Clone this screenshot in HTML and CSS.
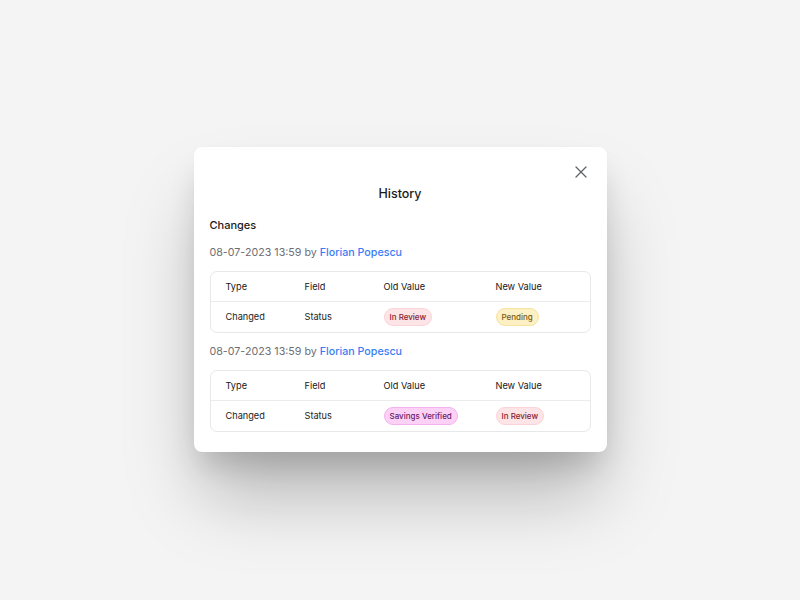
FILE: index.html
```html
<!DOCTYPE html>
<html lang="en">
<head>
<meta charset="utf-8">
<title>History</title>
<link rel="stylesheet" href="styles.css">
</head>
<body>
<div class="modal">
  <div class="modal-head">
    <h2 class="title">History</h2>
    <button class="close" aria-label="Close">
      <svg width="12" height="12" viewBox="0 0 12 12"><path d="M1 1L11 11M11 1L1 11" stroke="#5f6368" stroke-width="1.3" stroke-linecap="round"/></svg>
    </button>
  </div>
  <h3 class="section">Changes</h3>

  <div class="entry">
    <p class="meta">08-07-2023 13:59 by <span class="author">Florian Popescu</span></p>
    <table class="changes">
      <thead>
        <tr><th>Type</th><th>Field</th><th>Old Value</th><th>New Value</th></tr>
      </thead>
      <tbody>
        <tr>
          <td>Changed</td><td>Status</td>
          <td><span class="badge badge-review">In Review</span></td>
          <td><span class="badge badge-pending">Pending</span></td>
        </tr>
      </tbody>
    </table>
  </div>

  <div class="entry">
    <p class="meta">08-07-2023 13:59 by <span class="author">Florian Popescu</span></p>
    <table class="changes">
      <thead>
        <tr><th>Type</th><th>Field</th><th>Old Value</th><th>New Value</th></tr>
      </thead>
      <tbody>
        <tr>
          <td>Changed</td><td>Status</td>
          <td><span class="badge badge-verified">Savings Verified</span></td>
          <td><span class="badge badge-review">In Review</span></td>
        </tr>
      </tbody>
    </table>
  </div>
</div>
</body>
</html>
```

FILE: styles.css
```css
* { box-sizing: border-box; }

html, body {
  margin: 0;
  height: 100%;
}

body {
  background: #f4f4f4;
  font-family: Inter, "Noto Sans", sans-serif;
  color: #1f1f1f;
  display: flex;
  align-items: center;
  justify-content: center;
  padding-bottom: 2px;
}

.modal {
  width: 413px;
  background: #fff;
  border-radius: 8px;
  padding: 16px 16px 20px;
  box-shadow: 0 50px 70px -8px rgba(0, 0, 0, 0.26), 0 18px 30px -6px rgba(0, 0, 0, 0.14), 0 0 1px rgba(0, 0, 0, 0.05);
  display: flex;
  flex-direction: column;
}

.modal-head {
  position: relative;
  padding-top: 21px;
}

.title {
  margin: 0;
  text-align: center;
  font-size: 12.5px;
  line-height: 20px;
  font-weight: 500;
  color: #1a1a1a;
}

.close {
  position: absolute;
  top: 0;
  right: 1px;
  width: 18px;
  height: 18px;
  padding: 0;
  border: 0;
  background: none;
  display: flex;
  align-items: center;
  justify-content: center;
  cursor: pointer;
}

.section {
  margin: 13px 0 0;
  font-size: 11px;
  line-height: 16px;
  font-weight: 500;
  color: #1a1a1a;
}

.entry {
  display: flex;
  flex-direction: column;
  gap: 10px;
  margin-top: 12px;
}

.entry + .entry { margin-top: 11px; }

.meta {
  margin: 0;
  font-size: 10.7px;
  line-height: 16px;
  color: #6e6e73;
}

.author {
  color: #3b7cf4;
  font-weight: 500;
}

.changes {
  width: 100%;
  border-collapse: separate;
  border-spacing: 0;
  border: 1px solid #e8e8e8;
  border-radius: 7px;
  font-size: 9.2px;
  color: #222;
}

.changes th,
.changes td {
  text-align: left;
  padding: 0;
  height: 30px;
  vertical-align: middle;
}

.changes th {
  font-weight: 400;
  color: #161616;
  border-bottom: 1px solid #ececec;
}

.changes th:first-child,
.changes td:first-child { padding-left: 15px; width: 94px; }
.changes th:nth-child(2),
.changes td:nth-child(2) { width: 79px; }
.changes th:nth-child(3),
.changes td:nth-child(3) { width: 112px; }

.badge {
  display: inline-block;
  height: 18px;
  line-height: 16px;
  padding: 0 5px;
  border-radius: 9px;
  border: 1px solid transparent;
  font-size: 8px;
  font-weight: 500;
}

.badge-review {
  background: #fde4e6;
  border-color: #fbd3d8;
  color: #8a2232;
}

.badge-pending {
  background: #fcf0c4;
  border-color: #f7e29e;
  color: #765a10;
}

.badge-verified {
  background: #fbd2f6;
  border-color: #f3b2ef;
  color: #6a1a68;
}
```
